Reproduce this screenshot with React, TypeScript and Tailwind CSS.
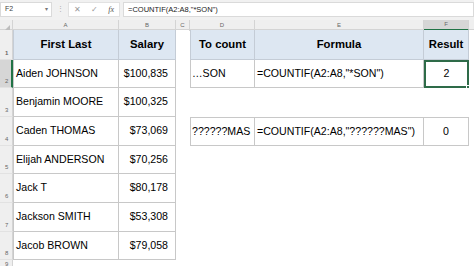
import React from 'react';

const people = [
    { name: 'Aiden JOHNSON', salary: '$100,835' },
    { name: 'Benjamin MOORE', salary: '$100,325' },
    { name: 'Caden THOMAS', salary: '$73,069' },
    { name: 'Elijah ANDERSON', salary: '$70,256' },
    { name: 'Jack T', salary: '$80,178' },
    { name: 'Jackson SMITH', salary: '$53,308' },
    { name: 'Jacob BROWN', salary: '$79,058' },
];

const heights = ['h-[28px]', 'h-[29px]', 'h-[29px]', 'h-[28px]', 'h-[29px]', 'h-[29px]', 'h-[28px]'];

const cols = 'grid grid-cols-[13px_106px_57px_14px_65px_169px_45px_1fr]';

const RowHead = ({ n, active }: { n: number; active?: boolean }) => (
    <div
        className={
            'flex items-end pl-[5px] pb-[1px] text-[6px] text-[#666] border-b border-[#e2e2e2] ' +
            (active ? 'bg-[#d6d6d6] border-r-2 border-r-[#217346]' : 'bg-[#efefef] border-r border-r-[#d4d4d4]')
        }
    >
        {n}
    </div>
);

const App: React.FC = () => {
    return (
        <div className="w-[474px] h-[266px] overflow-hidden bg-white font-['Liberation_Sans',Arial,sans-serif] text-black">
            {/* formula bar */}
            <div className="h-[20px] bg-[#f1f1f1] flex items-start pt-[2px] text-[7px] text-[#444]">
                <div className="w-[52px] h-[15px] bg-white border border-[#dadada] flex items-center justify-between pl-[4px] pr-[3px]">
                    <span>F2</span>
                    <span className="text-[6px] text-[#777]">▾</span>
                </div>
                <div className="w-[16px] h-[15px] flex items-center justify-center text-[#aaa]">⋮</div>
                <div className="w-[52px] h-[15px] bg-white border border-[#e2e2e2] flex items-center justify-around text-[#999]">
                    <span className="text-[8px]">✕</span>
                    <span className="text-[8px]">✓</span>
                    <span className="italic font-['Liberation_Serif',serif] text-[8px] text-[#555]">fx</span>
                </div>
                <div className="ml-[3px] flex-1 h-[15px] bg-white border border-[#dadada] flex items-center pl-[4px] text-[7.5px] text-[#222]">
                    =COUNTIF(A2:A8,"*SON")
                </div>
            </div>

            {/* column headers */}
            <div className={cols + ' h-[10px] bg-[#efefef] text-[6px] text-[#666] border-b border-[#d4d4d4]'}>
                <div className="relative border-r border-[#d4d4d4]">
                    <span className="absolute right-[2px] bottom-[1px] w-0 h-0 border-l-[5px] border-l-transparent border-b-[5px] border-b-[#bdbdbd]" />
                </div>
                <div className="flex items-center justify-center border-r border-[#d4d4d4]">A</div>
                <div className="flex items-center justify-center border-r border-[#d4d4d4]">B</div>
                <div className="flex items-center justify-center border-r border-[#d4d4d4]">C</div>
                <div className="flex items-center justify-center border-r border-[#d4d4d4]">D</div>
                <div className="flex items-center justify-center border-r border-[#d4d4d4]">E</div>
                <div className="flex items-center justify-center bg-[#d6d6d6] border-r border-[#d4d4d4] border-b-2 border-b-[#217346]">F</div>
                <div />
            </div>

            {/* row 1 */}
            <div className={cols + ' h-[30px] text-[11.3px] font-bold'}>
                <RowHead n={1} />
                <div className="flex items-center justify-center bg-[#dde7f2] border-l border-r border-b border-[#c4ccd6]">First Last</div>
                <div className="flex items-center justify-center bg-[#dde7f2] border-r border-b border-[#c4ccd6]">Salary</div>
                <div />
                <div className="flex items-center justify-center bg-[#dde7f2] border-l border-r border-b border-[#c4ccd6]">To count</div>
                <div className="flex items-center justify-center bg-[#dde7f2] border-r border-b border-[#c4ccd6]">Formula</div>
                <div className="flex items-center justify-center bg-[#dde7f2] border-r border-b border-[#c4ccd6]">Result</div>
                <div />
            </div>

            {people.map((p, i) => {
                const row = i + 2;
                return (
                    <div key={p.name} className={cols + ' ' + heights[i] + ' text-[10.6px]'}>
                        <RowHead n={row} active={row === 2} />
                        <div className="flex items-center pl-[2px] border-l border-r border-b border-[#c8c8c8] whitespace-nowrap">{p.name}</div>
                        <div className="flex items-center justify-end pr-[7px] border-r border-b border-[#c8c8c8]">{p.salary}</div>
                        <div />
                        {row === 2 && (
                            <>
                                <div className="flex items-center pl-[1px] border-l border-r border-b border-[#c8c8c8]">…SON</div>
                                <div className="flex items-center pl-[2px] border-r border-b border-[#c8c8c8] whitespace-nowrap">=COUNTIF(A2:A8,"*SON")</div>
                                <div className="relative flex items-center justify-center border-2 border-[#2e6b48]">
                                    2
                                    <span className="absolute -right-[3px] -bottom-[3px] w-[4px] h-[4px] bg-[#2e6b48] border border-white" />
                                </div>
                            </>
                        )}
                        {row === 4 && (
                            <>
                                <div className="flex items-center pl-[1px] border-l border-r border-t border-b border-[#c8c8c8] whitespace-nowrap">??????MAS</div>
                                <div className="flex items-center pl-[2px] border-r border-t border-b border-[#c8c8c8] whitespace-nowrap">=COUNTIF(A2:A8,"??????MAS")</div>
                                <div className="flex items-center justify-center border-r border-t border-b border-[#c8c8c8]">0</div>
                            </>
                        )}
                        {row !== 2 && row !== 4 && (
                            <>
                                <div />
                                <div />
                                <div />
                            </>
                        )}
                        <div />
                    </div>
                );
            })}

            {/* row 9 */}
            <div className={cols + ' h-[8px]'}>
                <RowHead n={9} />
            </div>
        </div>
    );
};

export default App;
